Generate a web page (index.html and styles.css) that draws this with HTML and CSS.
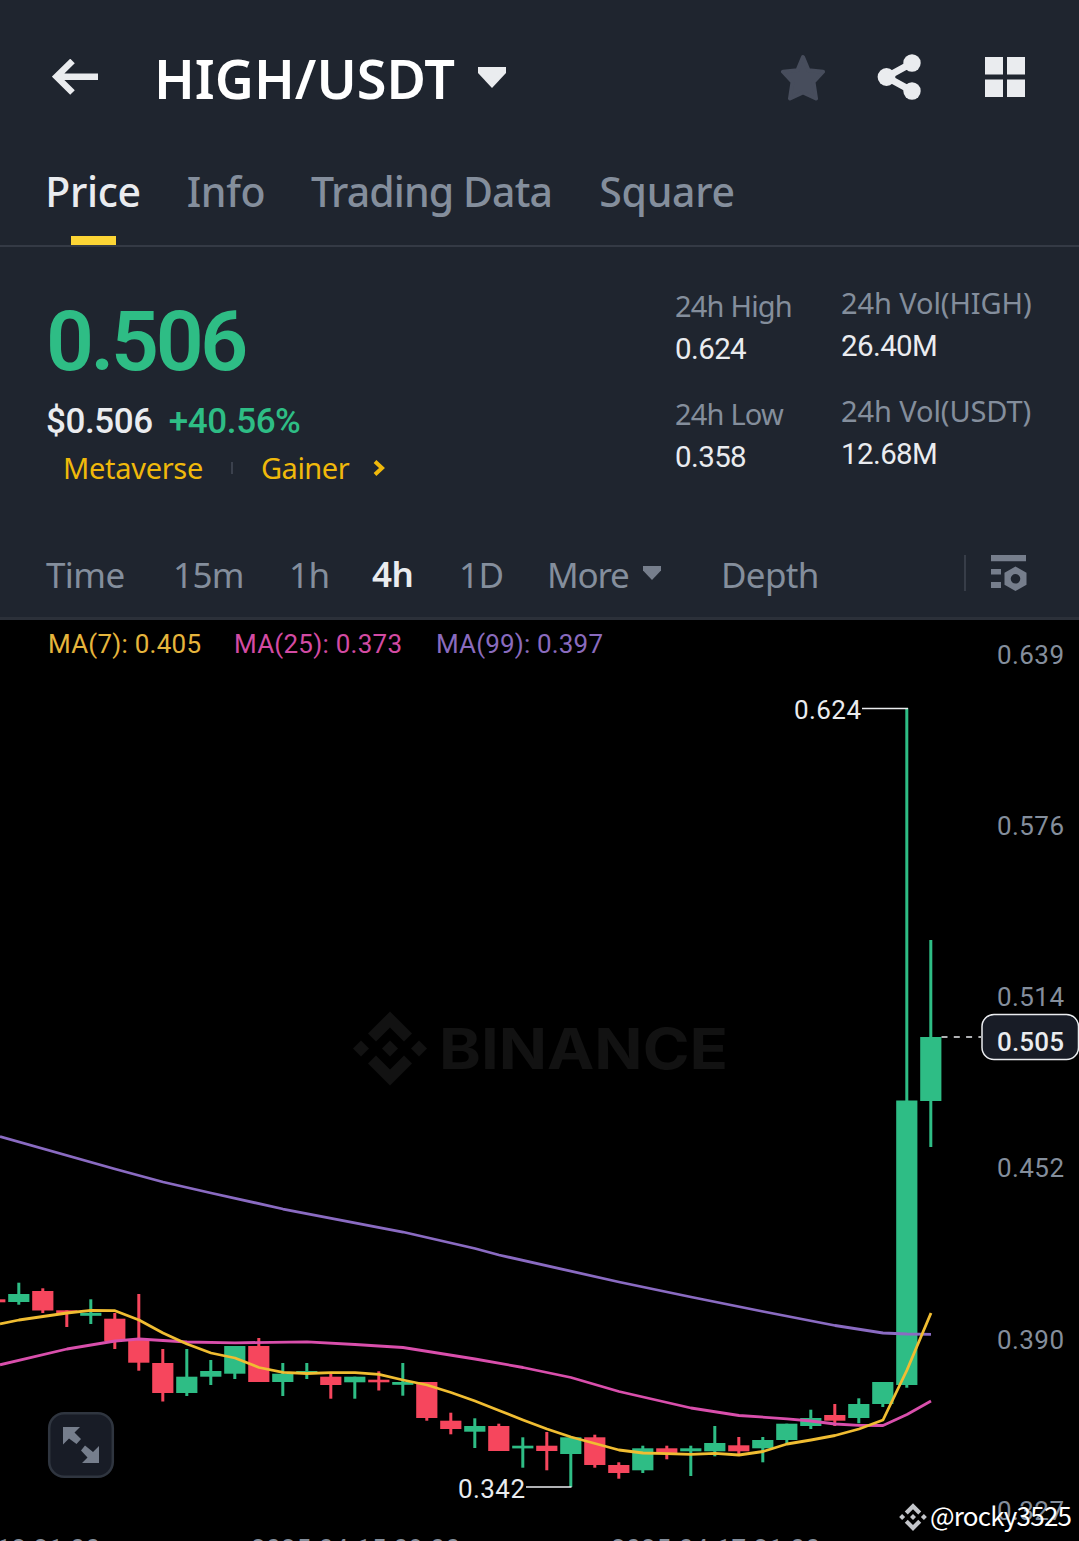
FILE: index.html
```html
<!DOCTYPE html>
<html lang="en">

<head>

    <meta charset="UTF-8">
    <meta name="viewport" content="width=device-width, initial-scale=1.0">
    <title>HIGH/USDT</title>

    <link rel="stylesheet" href="styles.css">

</head>

<body>

    <header class="header">

        <svg class="icon-back" viewBox="0 0 46 36" width="46" height="36">
            <path d="M46 17.700H6M20.500 2L4.500 17.700L20.500 33.500" />
        </svg>

        <h1 class="pair">HIGH/USDT</h1>

        <svg class="icon-caret" viewBox="0 0 28 21" width="28" height="21">
            <path d="M0 0H28V6L14 21L0 6Z" />
        </svg>

        <div class="header-actions">

            <svg class="icon-star" viewBox="0 0 46 47" width="46" height="47">
                <path d="M23 3L28.500 16.300L43 17.700L33.500 28L36 44.500L23 38.500L10 44.500L12.500 28L3 17.700L17.500 16.300Z" />
            </svg>

            <svg class="icon-share" viewBox="0 0 44 46" width="44" height="46">
                <path d="M35 9L9.500 23L35 37" />
                <circle cx="35" cy="9" r="8.700" />
                <circle cx="9.500" cy="23" r="8.900" />
                <circle cx="35" cy="37" r="8.700" />
            </svg>

            <svg class="icon-grid" viewBox="0 0 40 40" width="40" height="40">
                <path d="M0 0H18V17.500H0ZM22 0H40V17.500H22ZM0 22.500H18V40H0ZM22 22.500H40V40H22Z" />
            </svg>

        </div>

    </header>

    <nav class="tabs">
        <a class="tab tab-price active">Price</a>
        <a class="tab tab-info">Info</a>
        <a class="tab tab-trading">Trading Data</a>
        <a class="tab tab-square">Square</a>
    </nav>

    <section class="ticker">

        <div class="quote">

            <div class="last-price">0.506</div>

            <div class="fiat">
                <span class="fiat-price">$0.506</span>
                <span class="change">+40.56%</span>
            </div>

            <div class="tags">
                <span class="tag-meta">Metaverse</span>
                <span class="tag-line"></span>
                <span class="tag-gainer">Gainer</span>
                <svg class="icon-more" viewBox="0 0 12 16" width="12" height="16">
                    <path d="M2 1.500L9 8L2 14.500" />
                </svg>
            </div>

        </div>

        <div class="stats stats-price">
            <div class="stat">
                <div class="label">24h High</div>
                <div class="value">0.624</div>
            </div>
            <div class="stat">
                <div class="label">24h Low</div>
                <div class="value">0.358</div>
            </div>
        </div>

        <div class="stats stats-volume">
            <div class="stat">
                <div class="label">24h Vol(HIGH)</div>
                <div class="value">26.40M</div>
            </div>
            <div class="stat">
                <div class="label">24h Vol(USDT)</div>
                <div class="value">12.68M</div>
            </div>
        </div>

    </section>

    <nav class="intervals">

        <span class="iv-time">Time</span>
        <span class="iv-15m">15m</span>
        <span class="iv-1h">1h</span>
        <span class="iv-4h selected">4h</span>
        <span class="iv-1d">1D</span>
        <span class="iv-more">More</span>
        <svg class="icon-caret-small" viewBox="0 0 18 14" width="18" height="14">
            <path d="M0 0H18V4.500L9 14L0 4.500Z" />
        </svg>
        <span class="iv-depth">Depth</span>

        <div class="divider"></div>

        <svg class="icon-settings" viewBox="0 0 36 36" width="36" height="36">
            <path d="M0 0H35V6.300H0ZM0 14H10V19.500H0ZM0 27H10V33H0Z" />
            <path fill-rule="evenodd" d="M24.500 11.500L35.500 17.800V29.800L24.500 36L13.500 29.800V17.800ZM24.500 19A4.800 4.800 0 1 0 24.500 28.600A4.800 4.800 0 1 0 24.500 19Z" />
        </svg>

    </nav>

    <svg class="chart" viewBox="0 620 1079 921" width="1079" height="921">

        <defs>
            <g id="logo">
                <path d="M0 -37L22 -15L14 -7L0 -21L-14 -7L-22 -15ZM0 37L22 15L14 7L0 21L-14 7L-22 15ZM0 -8L8 0L0 8L-8 0ZM-29 -8L-21 0L-29 8L-37 0ZM29 -8L37 0L29 8L21 0Z" />
            </g>
        </defs>

        <g class="brand">
            <use href="#logo" x="390" y="1048.500" />
            <text x="439" y="1069" textLength="289" lengthAdjust="spacingAndGlyphs">BINANCE</text>
        </g>

        <g class="legend">
            <text class="ma7" x="48" y="653" textLength="153">MA(7): 0.405</text>
            <text class="ma25" x="234" y="653" textLength="168">MA(25): 0.373</text>
            <text class="ma99" x="436" y="653" textLength="167">MA(99): 0.397</text>
        </g>

        <g class="axis">
            <text x="997" y="664" textLength="67">0.639</text>
            <text x="997" y="835" textLength="67">0.576</text>
            <text x="997" y="1006" textLength="67">0.514</text>
            <text x="997" y="1177" textLength="67">0.452</text>
            <text x="997" y="1349" textLength="67">0.390</text>
            <text x="997" y="1520" textLength="67">0.327</text>
        </g>

        <g class="axis">
            <text x="-109" y="1558" textLength="209">2025-04-12 21:00</text>
            <text x="251" y="1558" textLength="209">2025-04-15 09:00</text>
            <text x="611" y="1558" textLength="209">2025-04-17 21:00</text>
        </g>

        <g id="candles"></g>
        <g id="averages"></g>

        <g class="marks">
            <path d="M862 708.500H908M526 1487H571.500" />
            <text x="794" y="719" textLength="67">0.624</text>
            <text x="458" y="1498" textLength="67">0.342</text>
        </g>

        <g class="last">
            <path d="M941.500 1037H981" />
            <rect x="982" y="1014.500" width="96.500" height="45" rx="12" />
            <text x="997" y="1050.500" textLength="67">0.505</text>
        </g>

        <g class="expand">
            <rect x="49.200" y="1413.200" width="63.600" height="63.600" rx="15" />
            <path d="M63 1427H80L74.500 1432.500L81 1439L76.500 1444L69 1438.500L63 1444.500ZM99 1463H82L87.500 1457.500L81 1450.500L85 1445.500L93 1452L99 1446Z" />
        </g>

        <g class="author">
            <use href="#logo" transform="translate(913 1517) scale(.375)" />
            <text x="930" y="1526" textLength="142">@rocky3525</text>
        </g>

    </svg>

    <script>

        const svgNs = 'http://www.w3.org/2000/svg';

        // side, body top, body bottom, wick top, wick bottom
        const candles = [
            ['down', 1299.3, 1302.3, 1299.3, 1302.3],
            ['up', 1294, 1302, 1282.7, 1304.7],
            ['down', 1291, 1310.5, 1288.3, 1313],
            ['down', 1310.3, 1313, 1310.3, 1327],
            ['up', 1312.8, 1315.8, 1299.3, 1324],
            ['down', 1318.7, 1341, 1313, 1349],
            ['down', 1340, 1362.7, 1294, 1370.7],
            ['down', 1363, 1393, 1349, 1401.5],
            ['up', 1376.7, 1393, 1349, 1396],
            ['up', 1371, 1376.7, 1360, 1385],
            ['up', 1346, 1373.7, 1346, 1379],
            ['down', 1346, 1382, 1338, 1382],
            ['up', 1373.7, 1382, 1363, 1396],
            ['up', 1371, 1373.7, 1363, 1379],
            ['down', 1376.7, 1385, 1374, 1398.7],
            ['up', 1376.7, 1382.3, 1376.7, 1398.7],
            ['down', 1379.7, 1382.3, 1371.3, 1390.5],
            ['up', 1382, 1384.8, 1363, 1395.7],
            ['down', 1382, 1418, 1382, 1420.7],
            ['down', 1420.7, 1429, 1412.7, 1434.3],
            ['up', 1426, 1431.7, 1418.3, 1448],
            ['down', 1426, 1451, 1423.7, 1451],
            ['up', 1445.7, 1448.4, 1437.3, 1467.7],
            ['down', 1445.7, 1451, 1432, 1470.3],
            ['up', 1437.3, 1454, 1437.3, 1487],
            ['down', 1437.3, 1465, 1434.7, 1467.7],
            ['down', 1465, 1473, 1462.3, 1478.7],
            ['up', 1448.3, 1470.3, 1445.7, 1473],
            ['down', 1448.3, 1453.5, 1445.7, 1459.3],
            ['up', 1448.3, 1451.3, 1445.7, 1476],
            ['up', 1443, 1451.3, 1426, 1456.3],
            ['down', 1445.3, 1451.3, 1437, 1454],
            ['up', 1440, 1448.3, 1437, 1462.3],
            ['up', 1423.7, 1440, 1423.7, 1443.3],
            ['up', 1418, 1426, 1409.7, 1429],
            ['down', 1415, 1420.7, 1404, 1426],
            ['up', 1404, 1418, 1398.3, 1423.3],
            ['up', 1382, 1404, 1382, 1407],
            ['up', 1100.5, 1385, 708, 1387.7],
            ['up', 1037, 1101, 940, 1147]
        ];

        const averages = {
            ma99: '0,1136.5 115,1169 163,1182 211,1193 283,1209 403,1232 475,1248.5 499,1255 619,1282 691,1297 763,1311.500 835,1325.500 883,1333 907,1334 931,1334.300',
            ma25: '0,1364.800 67,1349 115,1341 139,1339 187,1342 235,1342.800 307,1341.800 355,1344.500 403,1347.500 475,1359 523,1367.500 571,1377.500 619,1391.500 691,1408 739,1415.500 787,1418.800 811,1421 835,1424 859,1425.300 883,1425.500 907,1414.500 931,1401',
            ma7: '0,1324 19,1320 43,1316.500 67,1313 91,1310.300 115,1310.700 139,1320 163,1333 187,1344 211,1353 235,1358 259,1367.500 283,1372.300 307,1373.500 331,1372.600 355,1372.700 379,1374.300 403,1380 427,1385 451,1392.500 475,1401 499,1410.500 523,1420 547,1429 571,1437 595,1443.500 619,1450 643,1453 667,1453.700 691,1454.300 715,1453.300 739,1455 763,1451.500 787,1444 811,1440 835,1435.500 859,1429 883,1420 907,1370 931,1313'
        };

        const drawRect = (parent, side, x, y, width, height) => {

            const rect = document.createElementNS(svgNs, 'rect');
            rect.setAttribute('class', side);
            rect.setAttribute('x', x);
            rect.setAttribute('y', y);
            rect.setAttribute('width', width);
            rect.setAttribute('height', height);
            parent.appendChild(rect);

        };

        const candlesGroup = document.getElementById('candles');

        candles.forEach(([side, top, bottom, high, low], i) => {

            const x = -5.2 + i * 24;
            drawRect(candlesGroup, side, x - 1.5, high, 3, low - high);
            drawRect(candlesGroup, side, x - 10.6, top, 21.2, bottom - top);

        });

        Object.keys(averages).forEach(name => {

            const line = document.createElementNS(svgNs, 'polyline');
            line.setAttribute('class', name);
            line.setAttribute('points', averages[name]);
            document.getElementById('averages').appendChild(line);

        });

    </script>

</body>

</html>
```
FILE: styles.css
```css
* {
    box-sizing: border-box;
}

body {
    margin: 0;
    width: 1079px;
    height: 1541px;
    overflow: hidden;
    background-color: #1f252f;
    color: #eaecef;
    font-family: "Noto Sans", sans-serif;
    white-space: nowrap;
}

svg {
    display: block;
    flex: none;
}

.header {
    display: flex;
    align-items: center;
    height: 154px;
    padding: 0 54px 0 52px;
}

.icon-back path {
    fill: none;
    stroke: #eaecef;
    stroke-width: 6.500;
}

.pair {
    width: 324px;
    margin: 2px 0 0 56px;
    color: #fff;
    font-size: 54px;
    font-weight: 600;
    line-height: 60px;
}

.icon-caret,
.icon-grid {
    fill: #eaecef;
}

.header-actions {
    display: flex;
    align-items: center;
    margin-left: auto;
}

.icon-star {
    fill: #474d5c;
    stroke: #474d5c;
    stroke-width: 4;
    stroke-linejoin: round;
}

.icon-share {
    margin: 0 64px 0 51px;
    fill: #eaecef;
}

.icon-share path {
    fill: none;
    stroke: #eaecef;
    stroke-width: 7;
}

.tabs {
    display: flex;
    height: 93px;
    padding-left: 46px;
    border-bottom: 2px solid #343a45;
}

.tab {
    display: flex;
    flex-direction: column;
    align-items: center;
    justify-content: space-between;
    padding-top: 7px;
    color: #848e9c;
    font-size: 41px;
    font-weight: 500;
    line-height: 60px;
    letter-spacing: -0.3px;
}

.tab-price {
    width: 94px;
    margin-right: 47px;
}

.tab-info {
    width: 78px;
    margin-right: 45px;
}

.tab-trading {
    width: 243px;
    margin-right: 46px;
    letter-spacing: -0.9px;
}

.tab-square {
    width: 136px;
}

.tab.active {
    color: #eaecef;
}

.tab.active::after {
    content: "";
    width: 45px;
    height: 9px;
    background-color: #fcd535;
}

.ticker {
    display: flex;
    height: 286px;
    padding-left: 46px;
}

.quote {
    width: 629px;
    padding-top: 46px;
}

.last-price {
    color: #2ebd85;
    font-family: Roboto, sans-serif;
    font-size: 84px;
    font-weight: 600;
    line-height: 98px;
    letter-spacing: -3.4px;
}

.fiat {
    display: flex;
    gap: 16px;
    margin-top: 6px;
    font-family: Roboto, sans-serif;
    font-size: 35px;
    font-weight: 500;
    line-height: 50px;
    letter-spacing: -0.4px;
}

.change {
    color: #2ebd85;
}

.tags {
    display: flex;
    align-items: center;
    padding-left: 17px;
    color: #f0b90b;
    font-size: 29px;
    line-height: 42px;
    letter-spacing: -0.3px;
}

.tag-meta {
    width: 140px;
}

.tag-line {
    width: 2px;
    height: 12px;
    margin: 0 28px;
    background-color: #3b414d;
}

.tag-gainer {
    width: 89px;
    letter-spacing: -0.5px;
}

.icon-more {
    margin-left: 23px;
}

.icon-more path {
    fill: none;
    stroke: #f0b90b;
    stroke-width: 4;
}

.stats {
    width: 166px;
    padding-top: 39px;
}

.stats-volume {
    padding-top: 36px;
}

.stat {
    height: 108px;
}

.label {
    color: #848e9c;
    font-size: 29px;
    line-height: 40px;
    letter-spacing: -0.1px;
}

.stats-price .label {
    letter-spacing: -0.8px;
}

.value {
    padding-top: 2px;
    font-family: Roboto, sans-serif;
    font-size: 29.500px;
    line-height: 42px;
    letter-spacing: -0.6px;
}

.intervals {
    display: flex;
    align-items: center;
    height: 87px;
    padding: 0 52px 4px 46px;
    border-bottom: 3px solid #2b3039;
    color: #848e9c;
    font-size: 35px;
    line-height: 50px;
    letter-spacing: -0.6px;
}

.intervals span {
    padding-top: 4px;
}

.iv-time {
    width: 127px;
}

.iv-15m {
    width: 116px;
}

.iv-1h {
    width: 83px;
}

.iv-4h {
    width: 87px;
}

.iv-1d {
    width: 88px;
}

.iv-more {
    width: 96px;
    letter-spacing: -1.2px;
}

.intervals .iv-depth {
    margin-left: 60px;
    letter-spacing: -0.7px;
}

.intervals .selected {
    padding-top: 2px;
    color: #eaecef;
    font-weight: 600;
}

.icon-caret-small,
.icon-settings {
    fill: #767e8c;
}

.divider {
    width: 2px;
    height: 36px;
    margin: 0 25px 0 auto;
    background-color: #373d48;
}

.chart {
    background-color: #000;
    font-family: Roboto, sans-serif;
    font-size: 26px;
}

.brand {
    fill: #121212;
    font-family: Inter, sans-serif;
    font-size: 56px;
    font-weight: 700;
}

.legend .ma7 {
    fill: #e6b53c;
}

.legend .ma25 {
    fill: #d34ba3;
}

.legend .ma99 {
    fill: #8a6bbe;
}

.axis {
    fill: #848e9c;
}

.up {
    fill: #2ebd85;
}

.down {
    fill: #f6465d;
}

polyline {
    fill: none;
    stroke-width: 2.800;
    stroke-linejoin: round;
}

polyline.ma7 {
    stroke: #f0bd32;
}

polyline.ma25 {
    stroke: #d94fac;
}

polyline.ma99 {
    stroke: #8a6bc2;
}

.marks,
.last {
    fill: #eaecef;
}

.marks path {
    stroke: #eaecef;
    stroke-width: 1.500;
}

.last path {
    stroke: #eaecef;
    stroke-width: 1.500;
    stroke-dasharray: 6 6.300;
}

.last rect {
    fill: #181c26;
    stroke: #eaecef;
    stroke-width: 1.500;
}

.last text {
    font-weight: 500;
}

.expand rect {
    fill: #181c26;
    stroke: #2f353f;
    stroke-width: 2.500;
}

.expand path {
    fill: #767e8c;
}

.author {
    fill: #fff;
    font-family: "Noto Sans CJK SC", sans-serif;
    font-size: 26px;
}

.author use {
    fill: #c3c5ca;
}
```
